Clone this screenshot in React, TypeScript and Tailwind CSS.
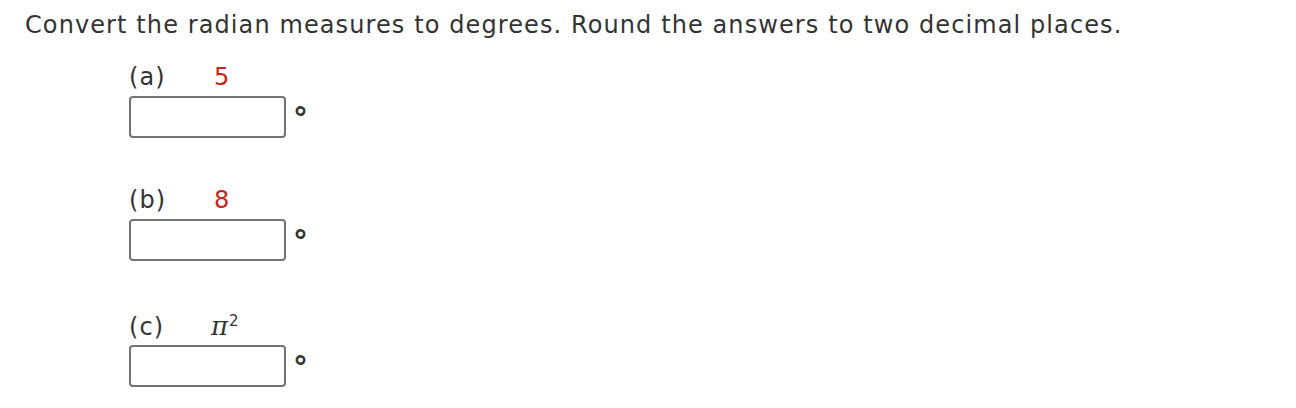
export default function App() {
  const items = [
    { label: '(a)', value: <span className="text-[#c8231b]">5</span>, gap: 'mt-[24px]' },
    { label: '(b)', value: <span className="text-[#c8231b]">8</span>, gap: 'mt-[48px]' },
    {
      label: '(c)',
      value: (
        <span className="text-[#333] -ml-[3px] inline-flex items-baseline">
          <span className="italic font-['DejaVu_Serif',serif] text-[26px] tracking-normal">π</span>
          <span className="text-[15px] tracking-normal relative -top-[9px] ml-[1px]">2</span>
        </span>
      ),
      gap: 'mt-[51px]',
    },
  ];
  return (
    <div className="w-[1296px] h-[408px] bg-white text-[#333] font-['DejaVu_Sans',Verdana,sans-serif] text-[24px] leading-[28px] tracking-[1.1px]">
      <p className="pl-[25px] pt-[11px]">
        Convert the radian measures to degrees. Round the answers to two decimal places.
      </p>
      <div className="pl-[129px] flex flex-col">
        {items.map((it) => (
          <div key={it.label} className={`flex flex-col ${it.gap}`}>
            <div className="flex items-baseline h-[28px]">
              <span className="w-[85px]">{it.label}</span>
              <span>{it.value}</span>
            </div>
            <div className="flex items-center mt-[5px]">
              <div className="w-[157px] h-[42px] border-2 border-[#737373] rounded-[4px] bg-white" />
              <span className="ml-[7px] mt-[3px] text-[30px] font-bold leading-[28px]">°</span>
            </div>
          </div>
        ))}
      </div>
    </div>
  );
}
